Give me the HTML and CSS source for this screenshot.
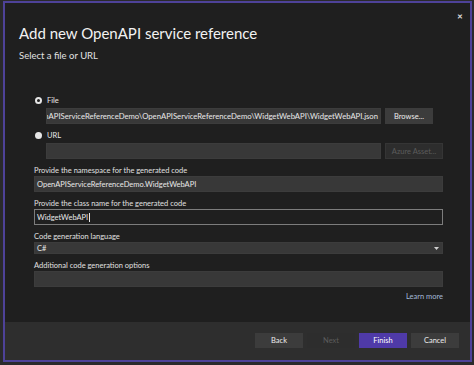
FILE: index.html
```html
<!DOCTYPE html>
<html lang="en">
<head>
  <meta charset="UTF-8">
  <meta name="viewport" content="width=device-width, initial-scale=1.0">
  <title>Add new OpenAPI service reference</title>
  <link rel="stylesheet" href="styles.css">
</head>
<body>
  <div class="dialog">
    <div class="close">&#x2715;</div>
    <div class="header">
      <h1>Add new OpenAPI service reference</h1>
      <p class="subtitle">Select a file or URL</p>
    </div>

    <div class="content">
      <div class="radio-row">
        <span class="radio checked"></span>
        <span>File</span>
      </div>
      <div class="field-row">
        <div class="textbox path"><span>OpenAPIServiceReferenceDemo\OpenAPIServiceReferenceDemo\WidgetWebAPI\WidgetWebAPI.json</span></div>
        <div class="btn small">Browse...</div>
      </div>

      <div class="radio-row url-row">
        <span class="radio"></span>
        <span>URL</span>
      </div>
      <div class="field-row">
        <div class="textbox"></div>
        <div class="btn small wide disabled">Azure Asset...</div>
      </div>

      <label class="label">Provide the namespace for the generated code</label>
      <div class="textbox full">OpenAPIServiceReferenceDemo.WidgetWebAPI</div>

      <label class="label">Provide the class name for the generated code</label>
      <div class="textbox full focused">WidgetWebAPI<span class="caret"></span></div>

      <label class="label">Code generation language</label>
      <div class="textbox full select">
        <span>C#</span>
        <svg width="5" height="3" viewBox="0 0 5 3"><path d="M0 0h5L2.5 3z" fill="#d0d0d0"/></svg>
      </div>

      <label class="label">Additional code generation options</label>
      <div class="textbox full"></div>

      <div class="learn"><a href="#">Learn more</a></div>
    </div>

    <div class="footer">
      <div class="btn">Back</div>
      <div class="btn disabled">Next</div>
      <div class="btn primary">Finish</div>
      <div class="btn">Cancel</div>
    </div>
  </div>
</body>
</html>
```

FILE: styles.css
```css
* {
  box-sizing: border-box;
}
html, body {
  height: 100%;
}
body {
  margin: 0;
  background-color: #2a2a2c;
  font-family: Lato, "Open Sans", sans-serif;
  color: #e6e6e6;
  padding: 1px 2px 3px 3px;
}
.dialog {
  position: relative;
  height: 100%;
  background: #1f1f1f;
  border: 2px solid #4e4299;
  display: flex;
  flex-direction: column;
}
.close {
  position: absolute;
  top: 9px;
  right: 7px;
  font-size: 7px;
  font-weight: 700;
  color: #d8d8d8;
}
.header {
  padding: 21px 14px 0 14px;
}
h1 {
  margin: 0;
  font-size: 15px;
  line-height: 19px;
  font-weight: 400;
  color: #f2f2f2;
}
.subtitle {
  margin: 6px 0 0 0;
  font-size: 9.5px;
  line-height: 13px;
  color: #e2e2e2;
}
.content {
  flex: 1;
  padding: 32px 27px 0 29px;
  font-size: 7.5px;
}
.radio-row {
  display: flex;
  align-items: center;
  gap: 5px;
  height: 12px;
  margin-left: 1px;
  color: #e8e8e8;
}
.url-row {
  margin-top: 5px;
}
.radio {
  width: 7px;
  height: 7px;
  border-radius: 50%;
  background: #e6e6e6;
}
.radio.checked {
  background: #1f1f1f;
  border: 2px solid #e6e6e6;
}
.field-row {
  display: flex;
  gap: 4px;
  margin: 2px 10px 0 12px;
}
.textbox {
  height: 16px;
  flex: 1;
  background: #383838;
  border: 1px solid #3c3c3c;
  display: flex;
  align-items: center;
  padding: 0 2px;
  white-space: nowrap;
  overflow: hidden;
  color: #e8e8e8;
}
.textbox.path {
  justify-content: flex-end;
  font-size: 7.7px;
}
.textbox.full {
  flex: none;
  width: 100%;
}
.textbox.focused {
  background: #1f1f1f;
  border: 1px solid #7c7c7c;
}
.caret {
  display: inline-block;
  width: 1px;
  height: 9px;
  background: #e8e8e8;
  margin-left: 1px;
}
.textbox.select {
  height: 12px;
  justify-content: space-between;
  padding-right: 3px;
}
.label {
  display: block;
  margin-top: 6px;
  line-height: 11px;
  color: #e0e0e0;
}
.btn {
  width: 48px;
  height: 15px;
  background: #3c3c3c;
  color: #ececec;
  font-size: 7.5px;
  display: flex;
  align-items: center;
  justify-content: center;
  flex: none;
}
.btn.small {
  height: 16px;
}
.btn.wide {
  width: 58px;
  margin-right: -10px;
}
.btn.disabled {
  background: #2d2d2d;
  color: #5c5c5c;
}
.btn.small.disabled {
  border: 1px solid #353535;
}
.btn.primary {
  background: #4f3aa8;
  color: #ffffff;
}
.learn {
  text-align: right;
  margin-top: 4px;
  line-height: 12px;
}
.learn a {
  color: #a3b9d9;
  text-decoration: none;
}
.footer {
  height: 38px;
  background: #2e2e2e;
  display: flex;
  justify-content: flex-end;
  align-items: center;
  gap: 4px;
  padding: 0 11px 2px 0;
}
```
